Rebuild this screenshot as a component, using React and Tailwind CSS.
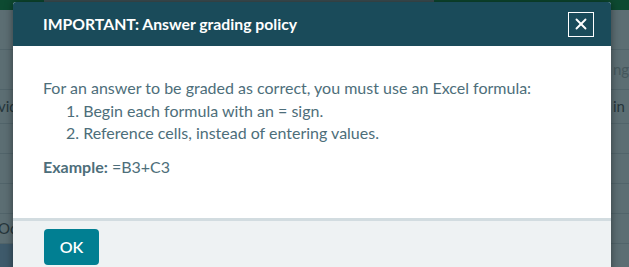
import React from 'react';
import { X } from 'lucide-react';

const BackdropStrip = ({ side }) => (
  <div className="flex h-full flex-col">
    <div className="h-[10px] bg-[#0d4a31]" />
    <div className="h-[40px] border-b border-[#51646a]" />
    <div className="flex h-[40px] items-center border-b border-[#51646a] text-[15px] text-[#46585d]">
      {side === 'right' ? <span className="ml-[2px]">ng</span> : null}
    </div>
    <div className="flex h-[34px] items-center border-b border-[#51646a] text-[15px] text-[#26363b]">
      {side === 'left' ? <span className="-ml-[2px]">vid</span> : <span className="ml-[2px]">in</span>}
    </div>
    <div className="h-[30px] border-b border-[#51646a]" />
    <div className="h-[30px] border-b border-[#51646a]" />
    <div className="h-[30px] border-b border-[#51646a]" />
    <div className="flex h-[30px] items-center border-b border-[#51646a] text-[15px] text-[#26363b]">
      {side === 'left' ? <span className="-ml-[2px]">Oct</span> : null}
    </div>
    <div className={side === 'left' ? 'flex-1 bg-[#3e5a6b]' : 'flex-1'} />
  </div>
);

export default function App() {
  return (
    <div
      className="relative flex h-[267px] w-[629px] overflow-hidden bg-[#5c6e73]"
      style={{ fontFamily: 'Lato, "Open Sans", sans-serif' }}
    >
      {/* dimmed page behind the dialog */}
      <div className="w-[13px]">
        <BackdropStrip side="left" />
      </div>
      <div className="flex flex-1 flex-col">
        <div className="flex h-[3px]">
          <div className="w-[31px] bg-[#0d4a31]" />
          <div className="w-[390px] bg-[#3f5155]" />
          <div className="flex-1 bg-[#0d4a31]" />
        </div>
      </div>
      <div className="w-[18px]">
        <BackdropStrip side="right" />
      </div>

      {/* dialog */}
      <div className="absolute left-[13px] top-[2px] flex h-[290px] w-[598px] flex-col overflow-hidden rounded-t-[3px] bg-white shadow-[0_0_8px_rgba(0,0,0,0.45)]">
        <div className="flex h-[44px] shrink-0 items-center justify-between bg-[#1a4b5a] pl-[30px] pr-[17px]">
          <h2 className="text-[15.75px] font-bold text-white">IMPORTANT: Answer grading policy</h2>
          <button className="flex h-[25px] w-[26px] items-center justify-center border-[1.5px] border-white text-white">
            <X className="h-[18px] w-[18px]" strokeWidth={2.5} />
          </button>
        </div>

        <div className="h-[172px] shrink-0 px-[30px] pt-[31px] text-[16px] leading-[22.5px] text-[#4d6e7a]">
          <p>For an answer to be graded as correct, you must use an Excel formula:</p>
          <ol className="pl-[23px]">
            <li>1. Begin each formula with an = sign.</li>
            <li>2. Reference cells, instead of entering values.</li>
          </ol>
          <p className="mt-[11px]">
            <span className="font-bold">Example:</span> =B3+C3
          </p>
        </div>

        <div className="flex-1 border-t-[3px] border-[#d2dce0] bg-[#eef2f3] px-[31px] pt-[8px]">
          <button className="h-[36px] w-[55px] rounded-[4px] bg-[#017f92] text-[16px] font-semibold text-white">
            OK
          </button>
        </div>
      </div>
    </div>
  );
}
